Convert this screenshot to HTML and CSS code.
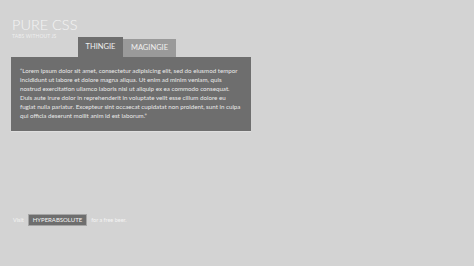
FILE: index.html
```html
<!DOCTYPE html>
<html>
<head>
<meta charset="utf-8">
<link rel="stylesheet" href="styles.css">
</head>
<body>
<div class="page">
  <header class="header">
    <h1 class="title">PURE CSS</h1>
    <div class="subtitle">TABS WITHOUT JS</div>
  </header>
  <div class="tabs">
    <div class="tab active">THINGIE</div>
    <div class="tab">MAGINGIE</div>
  </div>
  <div class="panel">
    <p class="panel-text">“Lorem ipsum dolor sit amet, consectetur adipisicing elit, sed do eiusmod tempor incididunt ut labore et dolore magna aliqua. Ut enim ad minim veniam, quis nostrud exercitation ullamco laboris nisi ut aliquip ex ea commodo consequat. Duis aute irure dolor in reprehenderit in voluptate velit esse cillum dolore eu fugiat nulla pariatur. Excepteur sint occaecat cupidatat non proident, sunt in culpa qui officia deserunt mollit anim id est laborum.”</p>
  </div>
  <footer class="footer">
    <span>Visit</span>
    <span class="badge">HYPERABSOLUTE</span>
    <span>for a free beer.</span>
  </footer>
</div>
</body>
</html>
```
FILE: styles.css
```css
html, body {
  margin: 0;
  padding: 0;
  background: #d3d3d3;
  font-family: Lato, "Open Sans", sans-serif;
  color: #f2f2f2;
}
.page {
  width: 474px;
  height: 266px;
  box-sizing: border-box;
  padding: 17px 0 0 11px;
  display: flex;
  flex-direction: column;
}
.header {
  padding-left: 1px;
}
.title {
  margin: 0;
  font-size: 14.5px;
  font-weight: 300;
  line-height: 15px;
  color: #f4f4f4;
}
.subtitle {
  font-size: 5px;
  line-height: 5px;
  margin-top: 2px;
  letter-spacing: 0.1px;
  color: #eeeeee;
}
.tabs {
  display: flex;
  align-items: flex-end;
  margin-left: 67px;
  margin-top: -2px;
  height: 20px;
}
.tab {
  font-size: 7.5px;
  line-height: 18px;
  height: 18px;
  padding: 0 7px;
  background: #9a9a9a;
  color: #f0f0f0;
  width: 39px;
  text-align: center;
  box-sizing: content-box;
}
.tab.active {
  background: #6e6e6e;
  height: 20px;
  line-height: 20px;
  width: 31px;
}
.panel {
  width: 240px;
  height: 74px;
  box-sizing: border-box;
  background: #6e6e6e;
  padding: 9px 9px 0 9px;
  box-shadow: 0 1px 1px rgba(255,255,255,0.25);
}
.panel-text {
  margin: 0;
  font-size: 6.2px;
  line-height: 9px;
  font-weight: 400;
  color: #e9e9e9;
}
.footer {
  margin-top: 83px;
  display: flex;
  align-items: center;
  gap: 4px;
  font-size: 5.5px;
  color: #f4f4f4;
  padding-left: 2px;
}
.badge {
  background: #6e6e6e;
  border: 1px solid #a5a5a5;
  padding: 0 4px;
  height: 10px;
  line-height: 10px;
  font-size: 6px;
  color: #f4f4f4;
}
```
